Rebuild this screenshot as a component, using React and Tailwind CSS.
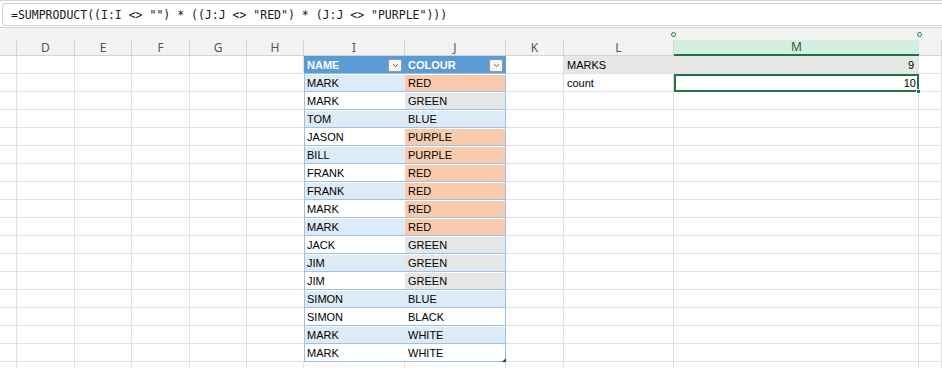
const widths = [17, 58, 57, 58, 57, 57, 101, 101, 58, 110, 245, 23];
const letters = ['', 'D', 'E', 'F', 'G', 'H', 'I', 'J', 'K', 'L', 'M', ''];

const people = [
    ['MARK', 'RED'],
    ['MARK', 'GREEN'],
    ['TOM', 'BLUE'],
    ['JASON', 'PURPLE'],
    ['BILL', 'PURPLE'],
    ['FRANK', 'RED'],
    ['FRANK', 'RED'],
    ['MARK', 'RED'],
    ['MARK', 'RED'],
    ['JACK', 'GREEN'],
    ['JIM', 'GREEN'],
    ['JIM', 'GREEN'],
    ['SIMON', 'BLUE'],
    ['SIMON', 'BLACK'],
    ['MARK', 'WHITE'],
    ['MARK', 'WHITE'],
];

const FilterButton = () => (
    <span className="ml-auto mr-[3px] flex h-[13px] w-[14px] items-center justify-center rounded-[2px] border border-[#9a9a9a] bg-[#f6f6f6]">
        <svg width="7" height="5" viewBox="0 0 7 5">
            <path d="M1 1.2 L3.5 3.6 L6 1.2" fill="none" stroke="#6a6a6a" strokeWidth="1" />
        </svg>
    </span>
);

const Cell = ({ w, className = '', children }) => (
    <div
        style={{ width: w }}
        className={`flex h-[18px] shrink-0 items-center border-r border-b border-[#e1e1e1] px-[3px] pt-px text-[11px] text-black ${className}`}
    >
        {children}
    </div>
);

const colourFill = (colour, band) => {
    if (colour === 'RED' || colour === 'PURPLE') return 'bg-[#f8cbad]';
    if (colour === 'GREEN') return 'bg-[#e7e6e6]';
    return band ? 'bg-[#ddebf7]' : 'bg-white';
};

const App = () => {
    return (
        <div className="h-[368px] w-[942px] overflow-hidden bg-white font-['Liberation_Sans',Arial,sans-serif]">
            {/* formula bar */}
            <div className="h-[27px] border-t border-[#d6d6d6] bg-white pt-[2px] pl-[2px]">
                <div className="flex h-[23px] items-center rounded-l-[4px] border border-r-0 border-[#d2d2d2] pt-[2px] pl-[8px] font-['DejaVu_Sans_Mono',monospace] text-[11.5px] text-[#1a1a1a]">
                    =SUMPRODUCT((I:I &lt;&gt; "") * ((J:J &lt;&gt; "RED") * (J:J &lt;&gt; "PURPLE")))
                </div>
            </div>

            {/* strip above column letters */}
            <div className="flex h-[13px] border-t border-[#d4d4d4] bg-[#f3f3f3]">
                {widths.map((w, i) => (
                    <div key={i} style={{ width: w }} className="relative shrink-0">
                        {i === 10 && (
                            <>
                                <span className="absolute top-[4px] left-[-3px] h-[5px] w-[5px] rounded-full border border-[#217346] bg-white" />
                                <span className="absolute top-[4px] right-[-3px] h-[5px] w-[5px] rounded-full border border-[#217346] bg-white" />
                            </>
                        )}
                    </div>
                ))}
            </div>

            {/* column letters */}
            <div className="flex h-[16px] bg-[#f3f3f3] font-['Noto_Sans',sans-serif] text-[12px]">
                {widths.map((w, i) => (
                    <div
                        key={i}
                        style={{ width: w }}
                        className={`flex shrink-0 items-center justify-center ${
                            i === 10
                                ? 'border-b-2 border-[#217346] bg-[#d3efdf] text-[#1e5e3b]'
                                : 'border-r border-b border-[#d4d4d4] text-[#555]'
                        }`}
                    >
                        {letters[i]}
                    </div>
                ))}
            </div>

            {/* table header row */}
            <div className="flex">
                {widths.slice(0, 6).map((w, i) => <Cell key={i} w={w} />)}
                <div className="flex h-[18px] w-[202px] shrink-0 border-b border-[#9bc2e6] bg-[#5b9bd5] pt-px text-[11px] font-bold text-white">
                    <div className="flex w-[101px] items-center pl-[3px]">NAME<FilterButton /></div>
                    <div className="flex w-[101px] items-center pl-[3px]">COLOUR<FilterButton /></div>
                </div>
                <Cell w={58} />
                <div className="flex h-[18px] w-[355px] shrink-0 items-center border-r border-b border-[#e1e1e1] bg-[#e7e6e6] px-[3px] pt-px text-[11px]">
                    <span>MARKS</span>
                    <span className="ml-auto pr-px">9</span>
                </div>
                <Cell w={23} />
            </div>

            {/* data rows */}
            {people.map(([name, colour], r) => {
                const band = r % 2 === 0;
                const last = r === people.length - 1;
                return (
                    <div key={r} className="flex">
                        {widths.slice(0, 6).map((w, i) => (
                            <Cell key={i} w={w} className={i === 5 ? 'border-r-0' : ''} />
                        ))}
                        <div className="relative flex h-[18px] w-[202px] shrink-0 border-x border-b border-[#9bc2e6] pt-px text-[11px]">
                            <div className={`flex w-[100px] items-center pl-[2px] ${band ? 'bg-[#ddebf7]' : 'bg-white'}`}>{name}</div>
                            <div className={`flex w-[100px] items-center pl-[3px] ${colourFill(colour, band)}`}>{colour}</div>
                            {last && (
                                <span className="absolute right-[-1px] bottom-[-1px] h-[4px] w-[4px] bg-[#1f3864]" style={{ clipPath: 'polygon(100% 0, 100% 100%, 0 100%)' }} />
                            )}
                        </div>
                        <Cell w={58} className="border-l-0" />
                        {r === 0 ? (
                            <>
                                <Cell w={110}>count</Cell>
                                <div className="relative flex h-[18px] w-[245px] shrink-0 items-center justify-end border-2 border-[#217346] pr-[1px] pt-px text-[11px]">
                                    10
                                    <span className="absolute right-[-4px] bottom-[-4px] h-[5px] w-[5px] border border-white bg-[#217346]" />
                                </div>
                            </>
                        ) : (
                            <>
                                <Cell w={110} />
                                <Cell w={245} />
                            </>
                        )}
                        <Cell w={23} />
                    </div>
                );
            })}

            {/* trailing empty row */}
            <div className="flex">
                {widths.map((w, i) => <Cell key={i} w={w} />)}
            </div>
        </div>
    );
};

export default App;
